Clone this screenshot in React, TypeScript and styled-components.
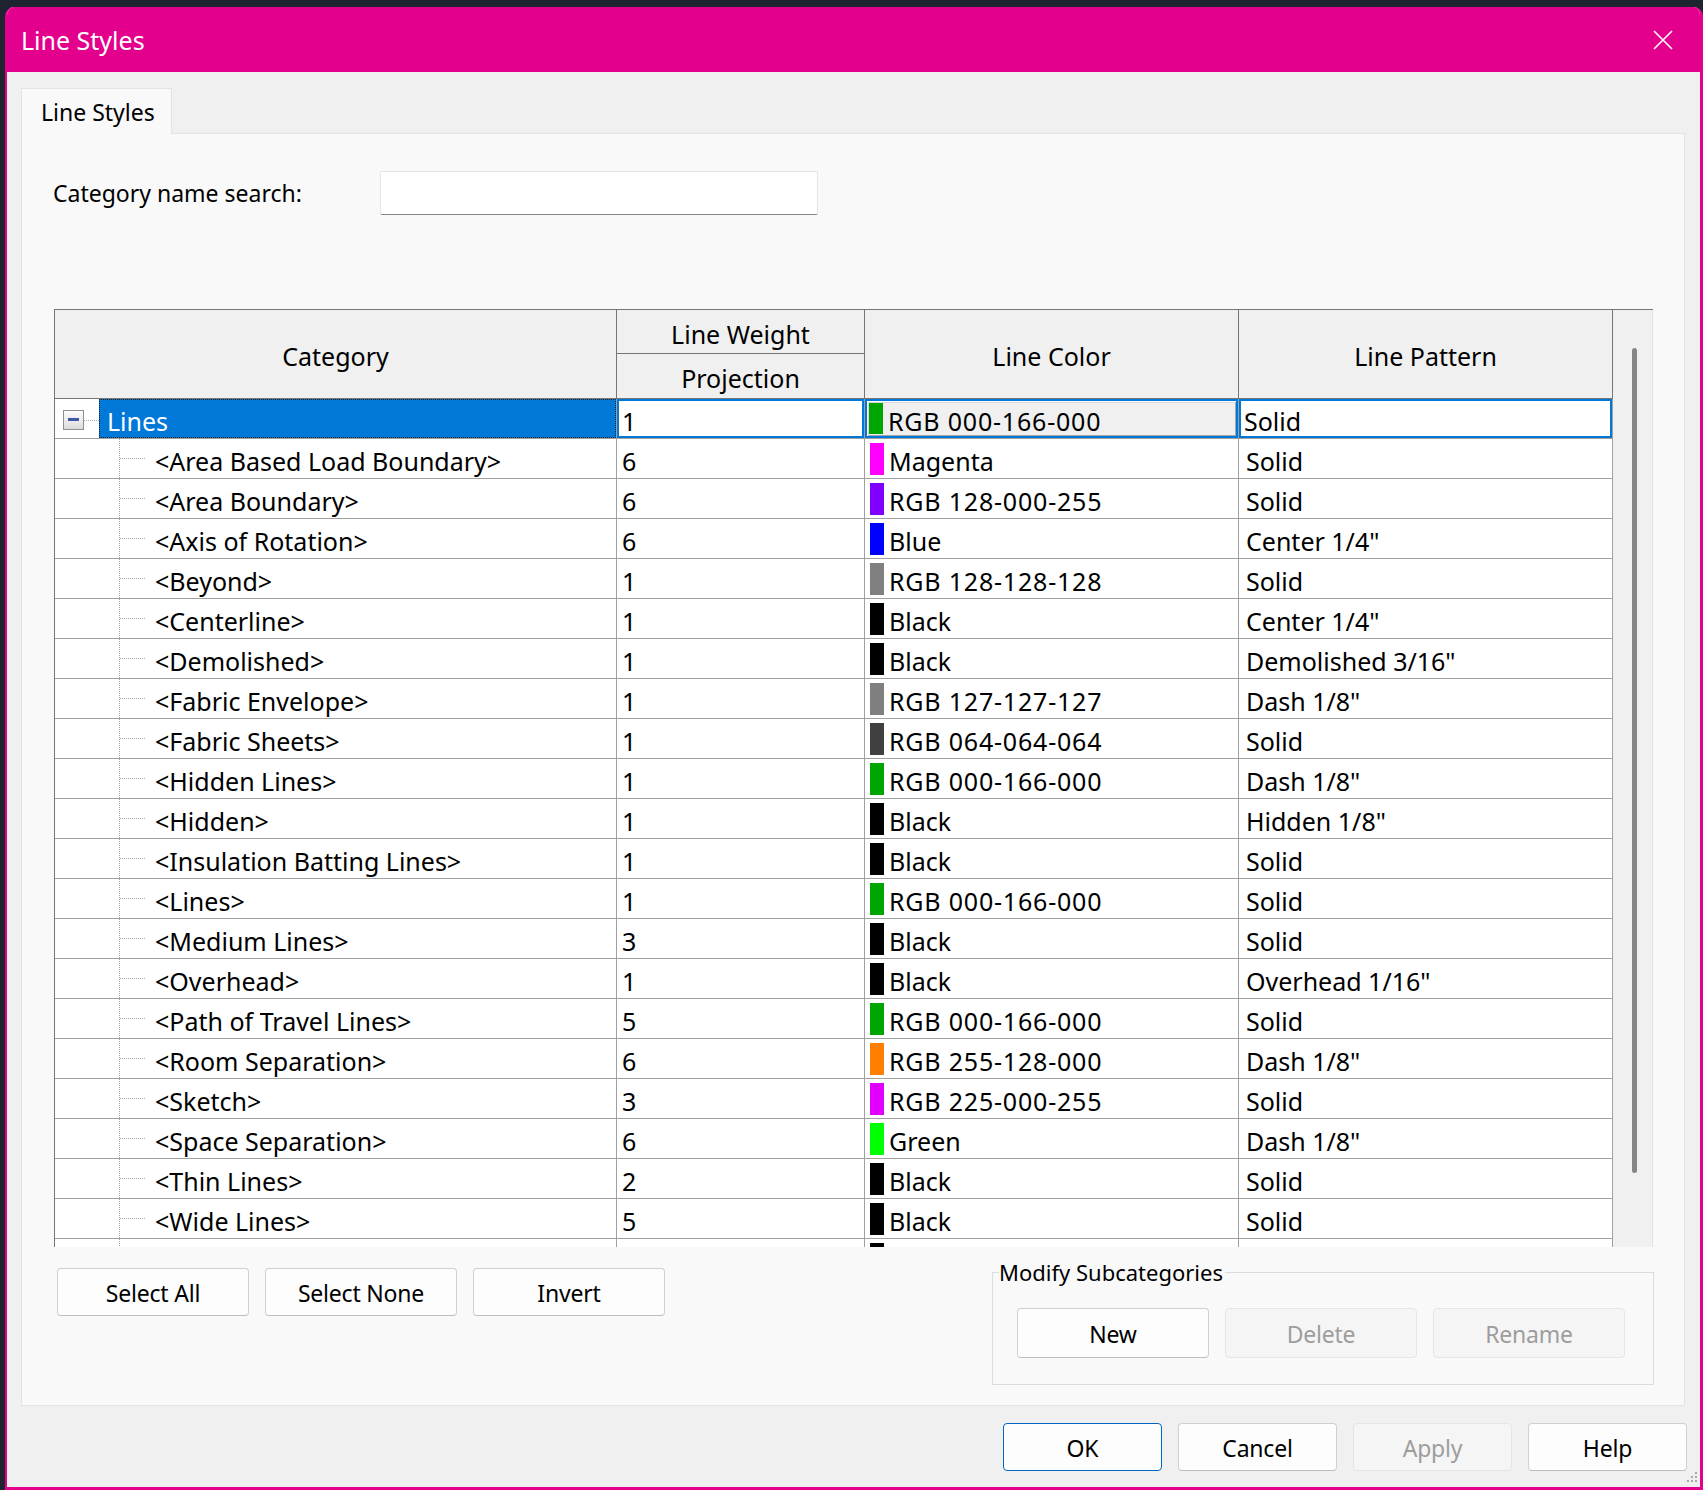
import React from 'react';
import styled, { createGlobalStyle } from 'styled-components';

const FONT = `"Noto Sans", "Open Sans", "DejaVu Sans", sans-serif`;

const GlobalStyle = createGlobalStyle`
  html, body { margin: 0; padding: 0; }
  body {
    background: #1e2430;
    width: 1703px;
    height: 1490px;
    overflow: hidden;
    font-family: ${FONT};
  }
  * { box-sizing: border-box; }
`;

const Dialog = styled.div`
  position: relative;
  margin: 7px 0 0 5px;
  width: 1698px;
  height: 1483px;
  border: 3px solid #e3008c;
  border-top: 0;
  border-left-width: 2px;
  border-radius: 9px 9px 0 0;
  overflow: hidden;
  background: #f0f0f0;
  display: flex;
  flex-direction: column;
  font-family: ${FONT};
  color: #000;
`;

const TitleBar = styled.div`
  height: 65px;
  flex: none;
  background: #e3008c;
  color: #fff;
  display: flex;
  align-items: center;
  justify-content: space-between;
  padding: 0 27px 0 14px;
  font-size: 25px;
`;

const TitleText = styled.span`
  padding-top: 1px;
`;

const CloseIcon = styled.svg`
  width: 20px;
  height: 20px;
  display: block;
`;

const Body = styled.div`
  flex: 1;
  display: flex;
  flex-direction: column;
  padding: 16px 13px 16px 14px;
`;

const TabStrip = styled.div`
  display: flex;
  height: 45px;
`;

const Tab = styled.div`
  position: relative;
  z-index: 1;
  width: 151px;
  height: 46px;
  border: 1px solid #e3e3e3;
  border-bottom: 0;
  background: #f9f9f9;
  padding-left: 19px;
  display: flex;
  align-items: center;
  font-size: 23px;
`;

const Panel = styled.div`
  width: 1664px;
  height: 1273px;
  border: 1px solid #e3e3e3;
  background: #f9f9f9;
  display: flex;
  flex-direction: column;
  padding: 0 30px 0 32px;
`;

const SearchRow = styled.div`
  margin-top: 37px;
  display: flex;
  align-items: center;
  height: 44px;
`;

const SearchLabel = styled.label`
  width: 327px;
  margin-left: -1px;
  font-size: 23px;
`;

const SearchInput = styled.input`
  width: 438px;
  height: 44px;
  border: 1px solid #e5e5e5;
  border-bottom-color: #868686;
  border-radius: 2px;
  background: #fff;
  font-family: ${FONT};
  font-size: 22px;
  outline: none;
`;

const TableFrame = styled.div`
  margin-top: 94px;
  width: 1599px;
  height: 938px;
  flex: none;
  border-top: 1px solid #767676;
  border-left: 1px solid #767676;
  display: flex;
  overflow: hidden;
  background: #fff;
`;

const Grid = styled.div`
  display: grid;
  grid-template-columns: 562px 248px 374px 374px;
  grid-template-rows: 44px 45px;
  grid-auto-rows: 40px;
  align-content: start;
  width: 1558px;
  flex: none;
`;

const HeadCell = styled.div<{ $span?: boolean }>`
  grid-row: ${(p) => (p.$span ? 'span 2' : 'auto')};
  background: #f0f0f0;
  border-right: 1px solid #767676;
  border-bottom: 1px solid #767676;
  display: flex;
  align-items: center;
  justify-content: center;
  font-size: 25px;
  padding-top: 4px;
`;

const Cell = styled.div<{ $active?: boolean }>`
  border-right: 1px solid #a0a0a0;
  border-bottom: 1px solid #a0a0a0;
  background: #fff;
  display: flex;
  align-items: stretch;
  font-size: 25px;
  white-space: nowrap;
  overflow: hidden;
  box-shadow: ${(p) => (p.$active ? 'inset 0 0 0 2px #0078d7' : 'none')};
`;

const CellText = styled.span<{ $spaced?: boolean }>`
  align-self: center;
  padding-top: 4px;
  letter-spacing: ${(p) => (p.$spaced ? '0.8px' : 'normal')};
`;

const CategoryCell = styled(Cell)`
  padding-left: 64px;
`;

const TreeGuide = styled.span`
  width: 27px;
  flex: none;
  border-left: 1px dotted #a0a0a0;
  background: repeating-linear-gradient(to right, #a8a8a8 0 1px, transparent 1px 2px) left center / 100% 1px no-repeat;
  margin-right: 9px;
`;

const RootCell = styled(Cell)`
  padding-left: 8px;
`;

const ExpandBox = styled.span`
  align-self: center;
  margin-top: 2px;
  width: 21px;
  height: 20px;
  flex: none;
  border: 1px solid #8f8f8f;
  background: linear-gradient(#fcfcfc, #dcdcdc);
  display: flex;
  align-items: center;
  justify-content: center;
`;

const MinusBar = styled.span`
  width: 11px;
  height: 3px;
  background: #4058a6;
`;

const Connector = styled.span`
  width: 15px;
  flex: none;
  background: repeating-linear-gradient(to right, #a8a8a8 0 1px, transparent 1px 2px) left calc(50% + 2px) / 100% 1px no-repeat;
`;

const SelectedLabel = styled.span`
  flex: 1;
  background: #0078d7;
  color: #fff;
  border: 1px dotted #222;
  padding-left: 7px;
  display: flex;
  align-items: center;
`;

const WeightCell = styled(Cell)`
  padding-left: 5px;
`;

const ColorCell = styled(Cell)`
  padding: 4px 0 3px 5px;
`;

const ActiveColorCell = styled(Cell)`
  padding: 3px 2px 2px 3px;
`;

const ColorButton = styled.span`
  flex: 1;
  display: flex;
  align-items: stretch;
  background: #f0f0f0;
  border: 1px solid #a8a8a8;
  border-top-color: #d8d8d8;
  border-left-color: #d8d8d8;
  padding-bottom: 1px;
`;

const Swatch = styled.span<{ $color: string }>`
  width: 14px;
  flex: none;
  background: ${(p) => p.$color};
  margin-right: 5px;
`;

const PatternCell = styled(Cell)<{ $active?: boolean }>`
  padding-left: ${(p) => (p.$active ? '5px' : '7px')};
`;

const ScrollTrack = styled.div`
  width: 40px;
  flex: none;
  background: #f0f0f0;
  border-right: 1px solid #e3e3e3;
  padding: 38px 0 0 19px;
`;

const ScrollThumb = styled.div`
  width: 5px;
  height: 825px;
  border-radius: 3px;
  background: #858585;
`;

const BottomRow = styled.div`
  margin-top: 9px;
  display: flex;
  justify-content: space-between;
  align-items: flex-start;
`;

const ButtonGroup = styled.div<{ $top?: number; $left?: number }>`
  display: flex;
  gap: 16px;
  margin-top: ${(p) => p.$top ?? 0}px;
  margin-left: ${(p) => p.$left ?? 0}px;
`;

const Button = styled.button<{ $w?: number; $h?: number; $primary?: boolean }>`
  width: ${(p) => p.$w ?? 192}px;
  height: ${(p) => p.$h ?? 48}px;
  border: 1px solid ${(p) => (p.$primary ? '#0067c0' : '#d0d0d0')};
  border-bottom-color: ${(p) => (p.$primary ? '#0067c0' : '#bdbdbd')};
  border-radius: 4px;
  background: #fdfdfd;
  font-family: ${FONT};
  font-size: 23px;
  letter-spacing: -0.2px;
  color: #000;
  padding: 2px 0 0;
  cursor: default;
  &:disabled {
    color: #9d9d9d;
    background: #f5f5f5;
    border-color: #e5e5e5;
  }
`;

const GroupBox = styled.fieldset`
  width: 662px;
  margin: 0;
  padding: 0 0 26px 0;
  border: 1px solid #dcdcdc;
  min-width: 0;
`;

const GroupLegend = styled.legend`
  margin-left: 6px;
  padding: 0 2px 0 0;
  font-size: 22px;
  line-height: 32px;
`;

const Footer = styled.div`
  margin-top: 17px;
  display: flex;
  justify-content: flex-end;
  gap: 16px;
`;

const Grip = styled.svg`
  position: absolute;
  right: 1px;
  bottom: 1px;
  width: 18px;
  height: 18px;
`;

type Row = { name: string; w: string; color: string; colorName: string; pattern: string };

const rows: Row[] = [
  { name: '<Area Based Load Boundary>', w: '6', color: '#ff00ff', colorName: 'Magenta', pattern: 'Solid' },
  { name: '<Area Boundary>', w: '6', color: '#8000ff', colorName: 'RGB 128-000-255', pattern: 'Solid' },
  { name: '<Axis of Rotation>', w: '6', color: '#0000ff', colorName: 'Blue', pattern: 'Center 1/4"' },
  { name: '<Beyond>', w: '1', color: '#808080', colorName: 'RGB 128-128-128', pattern: 'Solid' },
  { name: '<Centerline>', w: '1', color: '#000000', colorName: 'Black', pattern: 'Center 1/4"' },
  { name: '<Demolished>', w: '1', color: '#000000', colorName: 'Black', pattern: 'Demolished 3/16"' },
  { name: '<Fabric Envelope>', w: '1', color: '#7f7f7f', colorName: 'RGB 127-127-127', pattern: 'Dash 1/8"' },
  { name: '<Fabric Sheets>', w: '1', color: '#404040', colorName: 'RGB 064-064-064', pattern: 'Solid' },
  { name: '<Hidden Lines>', w: '1', color: '#00a600', colorName: 'RGB 000-166-000', pattern: 'Dash 1/8"' },
  { name: '<Hidden>', w: '1', color: '#000000', colorName: 'Black', pattern: 'Hidden 1/8"' },
  { name: '<Insulation Batting Lines>', w: '1', color: '#000000', colorName: 'Black', pattern: 'Solid' },
  { name: '<Lines>', w: '1', color: '#00a600', colorName: 'RGB 000-166-000', pattern: 'Solid' },
  { name: '<Medium Lines>', w: '3', color: '#000000', colorName: 'Black', pattern: 'Solid' },
  { name: '<Overhead>', w: '1', color: '#000000', colorName: 'Black', pattern: 'Overhead 1/16"' },
  { name: '<Path of Travel Lines>', w: '5', color: '#00a600', colorName: 'RGB 000-166-000', pattern: 'Solid' },
  { name: '<Room Separation>', w: '6', color: '#ff8000', colorName: 'RGB 255-128-000', pattern: 'Dash 1/8"' },
  { name: '<Sketch>', w: '3', color: '#e100ff', colorName: 'RGB 225-000-255', pattern: 'Solid' },
  { name: '<Space Separation>', w: '6', color: '#00ff00', colorName: 'Green', pattern: 'Dash 1/8"' },
  { name: '<Thin Lines>', w: '2', color: '#000000', colorName: 'Black', pattern: 'Solid' },
  { name: '<Wide Lines>', w: '5', color: '#000000', colorName: 'Black', pattern: 'Solid' },
  { name: '', w: '', color: '#000000', colorName: '', pattern: '' },
];

const isRgb = (s: string) => s.startsWith('RGB');

export default function App() {
  return (
    <>
      <GlobalStyle />
      <Dialog>
        <TitleBar>
          <TitleText>Line Styles</TitleText>
          <CloseIcon viewBox="0 0 20 20">
            <path d="M1 1 L19 19 M19 1 L1 19" stroke="#fff" strokeWidth="1.6" fill="none" />
          </CloseIcon>
        </TitleBar>
        <Body>
          <TabStrip>
            <Tab>Line Styles</Tab>
          </TabStrip>
          <Panel>
            <SearchRow>
              <SearchLabel>Category name search:</SearchLabel>
              <SearchInput type="text" />
            </SearchRow>
            <TableFrame>
              <Grid>
                <HeadCell $span>Category</HeadCell>
                <HeadCell>Line Weight</HeadCell>
                <HeadCell $span>Line Color</HeadCell>
                <HeadCell $span>Line Pattern</HeadCell>
                <HeadCell>Projection</HeadCell>

                <RootCell>
                  <ExpandBox>
                    <MinusBar />
                  </ExpandBox>
                  <Connector />
                  <SelectedLabel>
                    <CellText>Lines</CellText>
                  </SelectedLabel>
                </RootCell>
                <WeightCell $active>
                  <CellText>1</CellText>
                </WeightCell>
                <ActiveColorCell $active>
                  <ColorButton>
                    <Swatch $color="#00a600" />
                    <CellText $spaced>RGB 000-166-000</CellText>
                  </ColorButton>
                </ActiveColorCell>
                <PatternCell $active>
                  <CellText>Solid</CellText>
                </PatternCell>

                {rows.map((r, i) => (
                  <React.Fragment key={i}>
                    <CategoryCell>
                      <TreeGuide />
                      <CellText>{r.name}</CellText>
                    </CategoryCell>
                    <WeightCell>
                      <CellText>{r.w}</CellText>
                    </WeightCell>
                    <ColorCell>
                      <Swatch $color={r.color} />
                      <CellText $spaced={isRgb(r.colorName)}>{r.colorName}</CellText>
                    </ColorCell>
                    <PatternCell>
                      <CellText>{r.pattern}</CellText>
                    </PatternCell>
                  </React.Fragment>
                ))}
              </Grid>
              <ScrollTrack>
                <ScrollThumb />
              </ScrollTrack>
            </TableFrame>
            <BottomRow>
              <ButtonGroup $top={12} $left={3}>
                <Button>Select All</Button>
                <Button>Select None</Button>
                <Button>Invert</Button>
              </ButtonGroup>
              <GroupBox>
                <GroupLegend>Modify Subcategories</GroupLegend>
                <ButtonGroup $top={20} $left={24}>
                  <Button $h={50}>New</Button>
                  <Button $h={50} disabled>
                    Delete
                  </Button>
                  <Button $h={50} disabled>
                    Rename
                  </Button>
                </ButtonGroup>
              </GroupBox>
            </BottomRow>
          </Panel>
          <Footer>
            <Button $w={159} $primary>
              OK
            </Button>
            <Button $w={159}>Cancel</Button>
            <Button $w={159} disabled>
              Apply
            </Button>
            <Button $w={159}>Help</Button>
          </Footer>
        </Body>
        <Grip viewBox="0 0 18 18">
          <rect x="14" y="4" width="2" height="2" fill="#a8a8a8" />
          <rect x="10" y="8" width="2" height="2" fill="#a8a8a8" />
          <rect x="14" y="8" width="2" height="2" fill="#a8a8a8" />
          <rect x="6" y="12" width="2" height="2" fill="#a8a8a8" />
          <rect x="10" y="12" width="2" height="2" fill="#a8a8a8" />
          <rect x="14" y="12" width="2" height="2" fill="#a8a8a8" />
        </Grip>
      </Dialog>
    </>
  );
}
